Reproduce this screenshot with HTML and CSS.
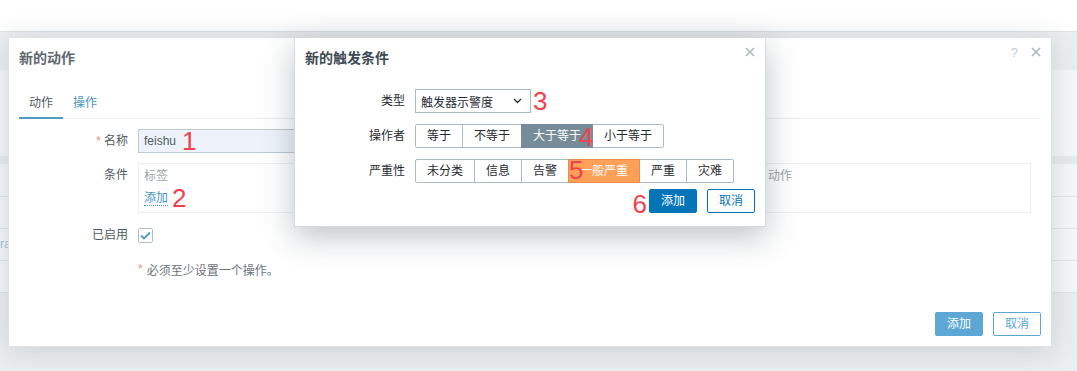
FILE: index.html
```html
<!DOCTYPE html>
<html lang="zh-CN">
<head>
  <meta charset="UTF-8">
  <title>新的动作</title>
  <link rel="stylesheet" href="styles.css">
</head>
<body>
  <div class="topbar"></div>
  <div class="content">
    <div class="panel">
      <div class="filter"></div>
      <div class="table-head"></div>
      <div class="table-row"></div>
      <div class="table-row"><span class="row-link">ra</span></div>
      <div class="table-row"></div>
    </div>
  </div>

  <!-- action dialog -->
  <div class="dialog action-dialog">
    <div class="dialog-header">
      <h4>新的动作</h4>
      <div class="header-tools">
        <span class="help">?</span>
        <svg class="close" width="10" height="10" viewBox="0 0 10 10"><path d="M1 1L9 9M9 1L1 9"/></svg>
      </div>
    </div>
    <div class="dialog-body">
      <ul class="tabs">
        <li class="active">动作</li>
        <li>操作</li>
      </ul>
      <div class="form">
        <div class="form-label"><span class="req">*</span> 名称</div>
        <div class="form-field">
          <div class="input-wrap">
            <input class="text-input" type="text" value="feishu">
            <span class="mark mark-1">1</span>
          </div>
        </div>

        <div class="form-label">条件</div>
        <div class="form-field">
          <div class="cond-box">
            <div class="cond-head">
              <span>标签</span>
              <span>名称</span>
              <span>动作</span>
            </div>
            <div class="cond-add"><a class="link">添加</a><span class="mark mark-2">2</span></div>
          </div>
        </div>

        <div class="form-label">已启用</div>
        <div class="form-field">
          <span class="checkbox">
            <svg width="11" height="9" viewBox="0 0 11 9"><path d="M1 4.5L4 7.5L10 1.5"/></svg>
          </span>
        </div>

        <div class="form-label"></div>
        <div class="form-field note"><span class="req">*</span> 必须至少设置一个操作。</div>
      </div>
    </div>
    <div class="dialog-footer">
      <button class="btn btn-soft">添加</button>
      <button class="btn btn-soft-alt">取消</button>
    </div>
  </div>

  <!-- trigger condition dialog -->
  <div class="dialog trigger-dialog">
    <div class="dialog-header">
      <h4>新的触发条件</h4>
      <div class="header-tools">
        <svg class="close" width="10" height="10" viewBox="0 0 10 10"><path d="M1 1L9 9M9 1L1 9"/></svg>
      </div>
    </div>
    <div class="trigger-form">
      <div class="t-label">类型</div>
      <div class="t-field">
        <div class="select">
          <span>触发器示警度</span>
          <svg width="9" height="6" viewBox="0 0 9 6"><path d="M1 1L4.5 4.5L8 1"/></svg>
        </div>
        <span class="mark mark-3">3</span>
      </div>

      <div class="t-label">操作者</div>
      <div class="t-field">
        <div class="seg">
          <span class="seg-item">等于</span>
          <span class="seg-item">不等于</span>
          <span class="seg-item op-on">大于等于<span class="mark mark-4">4</span></span>
          <span class="seg-item">小于等于</span>
        </div>
      </div>

      <div class="t-label">严重性</div>
      <div class="t-field">
        <div class="seg">
          <span class="seg-item">未分类</span>
          <span class="seg-item">信息</span>
          <span class="seg-item">告警</span>
          <span class="seg-item sev-on"><span class="mark mark-5">5</span>一般严重</span>
          <span class="seg-item">严重</span>
          <span class="seg-item">灾难</span>
        </div>
      </div>
    </div>
    <div class="dialog-footer">
      <span class="mark mark-6">6</span>
      <button class="btn btn-primary">添加</button>
      <button class="btn btn-alt">取消</button>
    </div>
  </div>
</body>
</html>
```

FILE: styles.css
```css
body {
  margin: 0;
  width: 1077px;
  height: 371px;
  overflow: hidden;
  position: relative;
  font-family: "Liberation Sans", "Noto Sans CJK SC", sans-serif;
  font-size: 12px;
  color: #1f2c33;
  background-color: #eceff1;
}
.topbar {
  height: 31px;
  background-color: #fff;
  border-bottom: 1px solid #dfe3e6;
}
.content {
  padding-top: 38px;
}
.panel {
  background-color: #f7f8f9;
}
.filter {
  height: 86px;
}
.table-head {
  height: 32px;
  border-top: 8px solid #e9ecee;
}
.table-row {
  height: 31px;
  border-top: 1px solid #e3e6e8;
  line-height: 31px;
}
.table-row:last-child {
  border-bottom: 1px solid #e3e6e8;
}
.row-link {
  color: #9fc4dc;
}

/* dialogs */
.dialog {
  position: absolute;
  top: 37px;
  box-sizing: border-box;
  background-color: #fff;
  border: 1px solid #dde2e5;
  display: flex;
  flex-direction: column;
}
.action-dialog {
  left: 8px;
  width: 1044px;
  height: 310px;
  box-shadow: 0 4px 28px rgba(40, 60, 70, 0.18);
}
.trigger-dialog {
  left: 294px;
  width: 472px;
  height: 190px;
  border-color: #d3d9dd;
  box-shadow: 0 10px 30px rgba(40, 60, 70, 0.3);
}
.dialog-header {
  display: flex;
  justify-content: space-between;
  padding: 9px 10px 0;
}
.dialog-header h4 {
  margin: 0;
  font-size: 14px;
  line-height: 22px;
  font-weight: bold;
}
.action-dialog h4 {
  color: #5d686e;
}
.trigger-dialog h4 {
  color: #3c4a52;
}
.header-tools {
  display: flex;
  align-items: center;
  gap: 13px;
  height: 10px;
  margin-top: 0;
}
.help {
  color: #c3cacf;
  font-size: 13px;
}
.close path {
  stroke: #b0bac0;
  stroke-width: 1.7;
  fill: none;
}
.dialog-body {
  padding: 0 10px;
}
.tabs {
  list-style: none;
  margin: 21px 0 0;
  padding: 0;
  display: flex;
  border-bottom: 1px solid #ebeef0;
}
.tabs li {
  height: 27px;
  line-height: 27px;
  padding: 0 10px;
  color: #4796c4;
  border-bottom: 2px solid transparent;
  margin-bottom: -1px;
}
.tabs li.active {
  color: #4f5a60;
  border-bottom-color: #4d9bc9;
}

/* main form */
.form {
  display: grid;
  grid-template-columns: 109px 1fr;
  column-gap: 10px;
  row-gap: 10px;
  margin-top: 10px;
  padding-right: 10px;
}
.form-label {
  text-align: right;
  line-height: 24px;
  color: #4f5a60;
}
.req {
  color: #ec8a8a;
}
.form-field {
  min-height: 24px;
  display: flex;
  align-items: center;
}
.input-wrap {
  position: relative;
}
.text-input {
  box-sizing: border-box;
  width: 453px;
  height: 24px;
  padding: 0 5px;
  border: 1px solid #bfc9d0;
  background-color: #eef3fb;
  font-family: inherit;
  font-size: 12px;
  color: #4f5a60;
  outline: none;
}
.cond-box {
  box-sizing: border-box;
  width: 100%;
  border: 1px solid #ebeef0;
  padding: 3px 5px 5px;
}
.cond-head {
  display: grid;
  grid-template-columns: 300px 324px auto;
  line-height: 18px;
  color: #9aa3a8;
}
.cond-add {
  margin-top: 4px;
  line-height: 18px;
  height: 18px;
}
.link {
  color: #4796c4;
  border-bottom: 1px dotted #4796c4;
}
.checkbox {
  box-sizing: border-box;
  width: 15px;
  height: 15px;
  border: 1px solid #b3bfc6;
  border-radius: 2px;
  display: flex;
  align-items: center;
  justify-content: center;
}
.checkbox path {
  stroke: #4d9bc9;
  stroke-width: 1.8;
  fill: none;
}
.note {
  color: #6b7479;
}
.note .req {
  margin-right: 4px;
}

/* annotation digits */
.mark {
  font-family: "Liberation Sans", sans-serif;
  font-size: 26px;
  color: #f2414d;
  line-height: 1;
}
.mark-1 {
  position: absolute;
  left: 44px;
  top: -1px;
}
.mark-2 {
  display: inline-block;
  height: 18px;
  line-height: 18px;
  vertical-align: top;
  margin-left: 4px;
}
.mark-3 {
  margin-left: 2px;
  line-height: 24px;
}
.mark-4 {
  position: absolute;
  left: 57px;
  top: -1px;
}
.mark-5 {
  position: absolute;
  left: 0;
  top: -3px;
}
.mark-6 {
  line-height: 24px;
  padding-top: 3px;
  margin-right: 2px;
}

/* trigger form */
.trigger-form {
  display: grid;
  grid-template-columns: 100px 1fr;
  column-gap: 10px;
  row-gap: 11px;
  padding: 20px 10px 0;
}
.t-label {
  text-align: right;
  line-height: 24px;
  color: #1f2c33;
}
.t-field {
  display: flex;
  align-items: center;
  height: 24px;
}
.select {
  box-sizing: border-box;
  width: 116px;
  height: 24px;
  border: 1px solid #acbbc2;
  padding: 0 8px 0 5px;
  display: flex;
  align-items: center;
  justify-content: space-between;
}
.select path {
  stroke: #1f2c33;
  stroke-width: 1.3;
  fill: none;
}
.seg {
  display: flex;
}
.seg-item {
  position: relative;
  height: 24px;
  box-sizing: border-box;
  line-height: 22px;
  padding: 0 11px;
  border: 1px solid #acbbc2;
  margin-left: -1px;
  background-color: #fff;
}
.seg-item:first-child {
  margin-left: 0;
  border-radius: 2px 0 0 2px;
}
.seg-item:last-child {
  border-radius: 0 2px 2px 0;
}
.op-on {
  background-color: #768d99;
  border-color: #768d99;
  color: #fff;
  z-index: 1;
}
.sev-on {
  background-color: #ffa059;
  border-color: #e88d4e;
  color: #fff;
  z-index: 1;
}

/* buttons */
.dialog-footer {
  margin-top: auto;
  display: flex;
  justify-content: flex-end;
  align-items: flex-start;
  padding: 0 10px 10px;
}
.btn {
  box-sizing: border-box;
  height: 24px;
  width: 48px;
  padding: 0;
  border: 1px solid;
  border-radius: 2px;
  font-family: inherit;
  font-size: 12px;
  line-height: 22px;
}
.btn + .btn {
  margin-left: 10px;
}
.btn-primary {
  background-color: #0275b8;
  border-color: #0275b8;
  color: #fff;
}
.btn-alt {
  background-color: #fff;
  border-color: #0275b8;
  color: #0275b8;
}
.btn-soft {
  background-color: #5ca7d4;
  border-color: #5ca7d4;
  color: #fff;
}
.btn-soft-alt {
  background-color: #fff;
  border-color: #5ca7d4;
  color: #5ca7d4;
}
```
